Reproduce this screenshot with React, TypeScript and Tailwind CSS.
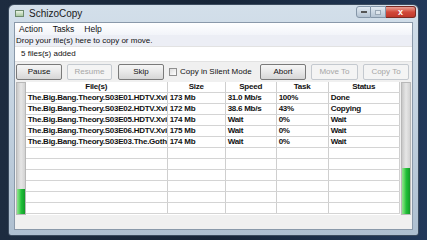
import React from 'react';

type Row = { file: string; size: string; speed: string; task: string; status: string };

const ROWS: Row[] = [
  { file: 'The.Big.Bang.Theory.S03E01.HDTV.XviD', size: '173 Mb', speed: '31.0 Mb/s', task: '100%', status: 'Done' },
  { file: 'The.Big.Bang.Theory.S03E02.HDTV.XviD', size: '172 Mb', speed: '38.6 Mb/s', task: '43%', status: 'Copying' },
  { file: 'The.Big.Bang.Theory.S03E05.HDTV.XviD', size: '174 Mb', speed: 'Wait', task: '0%', status: 'Wait' },
  { file: 'The.Big.Bang.Theory.S03E06.HDTV.XviD', size: '175 Mb', speed: 'Wait', task: '0%', status: 'Wait' },
  { file: 'The.Big.Bang.Theory.S03E03.The.Gothowitz', size: '174 Mb', speed: 'Wait', task: '0%', status: 'Wait' },
];

const EMPTY_ROWS = 6;

const COLS = [
  { key: 'file', label: 'File(s)', w: 'w-[142px]' },
  { key: 'size', label: 'Size', w: 'w-[58px]' },
  { key: 'speed', label: 'Speed', w: 'w-[51px]' },
  { key: 'task', label: 'Task', w: 'w-[52px]' },
  { key: 'status', label: 'Status', w: 'w-[71px]' },
] as const;

const Button: React.FC<{ label: string; disabled?: boolean; className?: string }> = ({ label, disabled, className = '' }) => (
  <div
    className={`h-[16px] flex items-center justify-center rounded-[2px] border text-[8px] ${
      disabled
        ? 'border-[#c4c9cf] bg-[#f4f4f4] text-[#a6a6a6]'
        : 'border-[#7a7a7a] bg-gradient-to-b from-[#f6f6f6] via-[#e8e8e8] to-[#d6d6d6] text-[#111]'
    } ${className}`}
  >
    {label}
  </div>
);

const SideBar: React.FC<{ fill: string }> = ({ fill }) => (
  <div className="w-[11px] flex flex-col bg-gradient-to-r from-[#c8c8c8] via-[#e6e6e6] to-[#d2d2d2] border border-[#b8b8b8]">
    <div className="flex-1" />
    <div className={`${fill} bg-gradient-to-r from-[#8ee68f] via-[#21c33b] to-[#129a28]`} />
  </div>
);

export default function App() {
  return (
    <div
      className="w-[427px] h-[240px] overflow-hidden pl-[8px] pt-[4px] bg-gradient-to-r from-[#1d2c40] via-[#172538] to-[#22395a]"
      style={{ fontFamily: '"Liberation Sans", Arial, sans-serif' }}
    >
      {/* window frame */}
      <div className="w-[411px] h-[232px] flex flex-col rounded-t-[6px] rounded-b-[3px] border border-[#3b4b5e] bg-gradient-to-b from-[#d3dfea] via-[#c2d1df] to-[#aebfd0] px-[5px] pb-[5px]">
        {/* title bar */}
        <div className="h-[17px] flex items-center relative">
          <div className="w-[9px] h-[7px] ml-[1px] border border-[#6d8a6d] bg-gradient-to-b from-[#e9f3e4] to-[#a9c8a0]" />
          <span className="ml-[5px] text-[10px] text-[#1a1a1a]">SchizoCopy</span>
          <div className="absolute right-[-3px] top-[1px] flex">
            <div className="w-[15px] h-[12px] flex items-center justify-center border border-[#8596a8] rounded-l-[3px] bg-gradient-to-b from-[#e2eaf2] to-[#b4c3d2]">
              <div className="w-[6px] h-[2px] bg-white border-[0.5px] border-[#555]" />
            </div>
            <div className="w-[15px] h-[12px] flex items-center justify-center border-y border-r border-[#8596a8] bg-gradient-to-b from-[#e2eaf2] to-[#b4c3d2]">
              <div className="w-[6px] h-[5px] border border-[#9aa8b6] bg-[#dde5ec]" />
            </div>
            <div className="w-[30px] h-[12px] flex items-center justify-center border-y border-r border-[#7a2a22] rounded-r-[3px] bg-gradient-to-b from-[#e8a096] via-[#d2493a] to-[#c0392b] text-white text-[9px] font-bold leading-none">
              x
            </div>
          </div>
        </div>

        {/* client area */}
        <div className="flex-1 flex flex-col border border-[#8a99aa] bg-[#f0f0f0]">
          <div className="h-[12px] flex items-center gap-[10px] pl-[4px] text-[8.5px] text-[#111] bg-gradient-to-b from-[#ffffff] to-[#f2f4f9]">
            <span>Action</span>
            <span>Tasks</span>
            <span>Help</span>
          </div>
          <div className="h-[11px] flex items-center pl-[1px] text-[8px] text-[#111] bg-[#eceef5]">
            Drop your file(s) here to copy or move.
          </div>
          <div className="h-[16px] flex items-center pl-[6px] text-[8px] text-[#111] bg-white border-y border-[#e2e2e2]">
            5 files(s) added
          </div>

          {/* buttons */}
          <div className="h-[20px] flex items-center pl-[1px] pr-[3px]">
            <Button label="Pause" className="w-[46px]" />
            <Button label="Resume" disabled className="w-[45px] ml-[5px]" />
            <Button label="Skip" className="w-[46px] ml-[6px]" />
            <div className="ml-[5px] w-[8px] h-[8px] border border-[#8f8f8f] bg-gradient-to-br from-[#dcdcdc] to-white" />
            <span className="ml-[3px] text-[8px] text-[#111]">Copy in Silent Mode</span>
            <div className="flex-1" />
            <Button label="Abort" className="w-[46px]" />
            <Button label="Move To" disabled className="w-[47px] ml-[5px]" />
            <Button label="Copy To" disabled className="w-[46px] ml-[5px]" />
          </div>

          {/* table with side progress bars */}
          <div className="h-[133px] flex pl-[1px] pr-[1px]">
            <SideBar fill="h-[25px]" />
            <div className="w-[374px] bg-white flex flex-col text-[8px] tracking-[-0.25px] font-bold text-[#111] leading-none">
              <div className="h-[11px] flex border-b border-[#d4d4d4]">
                {COLS.map((c) => (
                  <div key={c.key} className={`${c.w} shrink-0 flex items-center justify-center border-r border-[#cfcfcf]`}>
                    {c.label}
                  </div>
                ))}
              </div>
              {ROWS.map((r, i) => (
                <div key={i} className="h-[11px] flex border-b border-[#d4d4d4]">
                  {COLS.map((c) => (
                    <div
                      key={c.key}
                      className={`${c.w} shrink-0 flex items-center pl-[2px] overflow-hidden whitespace-nowrap border-r border-[#cfcfcf]`}
                    >
                      {r[c.key]}
                    </div>
                  ))}
                </div>
              ))}
              {Array.from({ length: EMPTY_ROWS }).map((_, i) => (
                <div key={`e${i}`} className="h-[11px] flex border-b border-[#d4d4d4]">
                  {COLS.map((c) => (
                    <div key={c.key} className={`${c.w} shrink-0 border-r border-[#cfcfcf]`} />
                  ))}
                </div>
              ))}
            </div>
            <div className="w-[2px]" />
            <SideBar fill="h-[46px]" />
          </div>
          <div className="flex-1" />
        </div>
      </div>
    </div>
  );
}
